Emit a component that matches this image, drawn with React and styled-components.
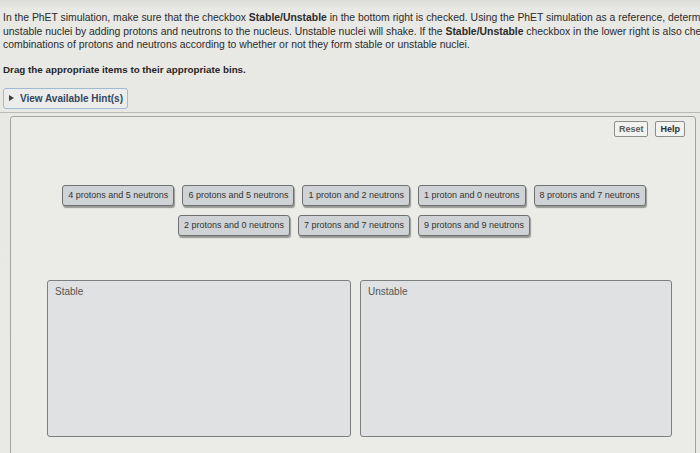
import React from 'react'
import styled, { createGlobalStyle } from 'styled-components'

const GlobalStyle = createGlobalStyle`
  html, body {
    margin: 0;
    padding: 0;
    background: #e7e7e3;
    overflow: hidden;
  }
  * { box-sizing: border-box; }
`

const Page = styled.div`
  width: 700px;
  height: 453px;
  overflow: hidden;
  font-family: "Liberation Sans", Arial, sans-serif;
  color: #2b2b2b;
  background: linear-gradient(180deg, #dcdcd8 0px, #e8e8e4 9px, #e9e9e5 100%);
  padding-top: 11px;
`

const Prompt = styled.div`
  padding: 0 0 0 3px;
  font-size: 10.4px;
  line-height: 13.5px;
  white-space: nowrap;
`

const Line = styled.div``

const Instruction = styled.div`
  margin-top: 12px;
  padding-left: 3px;
  font-size: 9.8px;
  font-weight: bold;
  color: #262626;
`

const HintButton = styled.button`
  display: flex;
  align-items: center;
  gap: 6px;
  margin: 13px 0 0 3px;
  width: 125px;
  height: 21px;
  padding: 0 0 0 5px;
  border: 1.5px solid #9fbad2;
  border-radius: 3px;
  background: #ecedeb;
  font-family: inherit;
  font-size: 10px;
  font-weight: bold;
  color: #33465e;
  cursor: pointer;
`

const Arrow = styled.span`
  width: 0;
  height: 0;
  border-top: 3.5px solid transparent;
  border-bottom: 3.5px solid transparent;
  border-left: 5px solid #3a3d42;
`

const Divider = styled.div`
  margin-top: 3px;
  height: 1px;
  background: #b9b9b6;
`

const Panel = styled.div`
  margin: 3px 4px 0 10px;
  height: 360px;
  border: 1px solid #a3a3a0;
  border-radius: 3px;
  background: #ebebe7;
  padding: 4px 10px 0 0;
`

const Toolbar = styled.div`
  display: flex;
  justify-content: flex-end;
  gap: 7px;
`

const ToolButton = styled.button`
  height: 16px;
  padding: 0 4px;
  border: 1px solid #8d8d8a;
  border-radius: 2px;
  background: #f2f2f0;
  font-family: inherit;
  font-size: 9px;
  font-weight: bold;
  color: ${p => (p.$muted ? '#5a5a5a' : '#2e2e2e')};
`

const ItemsArea = styled.div`
  display: flex;
  flex-wrap: wrap;
  justify-content: center;
  row-gap: 9px;
  column-gap: 8px;
  width: 610px;
  margin: 48px 0 0 38px;
`

const Chip = styled.div`
  height: 21px;
  display: flex;
  align-items: center;
  padding: 0 5px;
  border: 1px solid #6e7072;
  border-radius: 3px;
  background: #d0d3d5;
  box-shadow: 1px 2px 1px rgba(0, 0, 0, 0.35);
  font-size: 9px;
  color: #333;
  white-space: nowrap;
`

const Bins = styled.div`
  display: flex;
  gap: 9px;
  margin: 44px 0 0 36px;
`

const Bin = styled.div`
  width: ${p => p.$w}px;
  height: 157px;
  border: 1px solid #7c7e80;
  border-radius: 3px;
  background: #dfe1e2;
  padding: 5px 7px;
  font-size: 10px;
  color: #555;
`

const items = [
  '4 protons and 5 neutrons',
  '6 protons and 5 neutrons',
  '1 proton and 2 neutrons',
  '1 proton and 0 neutrons',
  '8 protons and 7 neutrons',
  '2 protons and 0 neutrons',
  '7 protons and 7 neutrons',
  '9 protons and 9 neutrons',
]

export default function App() {
  return (
    <Page>
      <GlobalStyle />
      <Prompt>
        <Line>
          In the PhET simulation, make sure that the checkbox <b>Stable/Unstable</b> in the bottom right is checked. Using the PhET simulation as a reference, determine how to make stable and
        </Line>
        <Line>
          unstable nuclei by adding protons and neutrons to the nucleus. Unstable nuclei will shake. If the <b>Stable/Unstable</b> checkbox in the lower right is also checked, sort the following
        </Line>
        <Line>
          combinations of protons and neutrons according to whether or not they form stable or unstable nuclei.
        </Line>
      </Prompt>
      <Instruction>Drag the appropriate items to their appropriate bins.</Instruction>
      <HintButton>
        <Arrow />
        View Available Hint(s)
      </HintButton>
      <Divider />
      <Panel>
        <Toolbar>
          <ToolButton $muted>Reset</ToolButton>
          <ToolButton>Help</ToolButton>
        </Toolbar>
        <ItemsArea>
          {items.map(t => (
            <Chip key={t}>{t}</Chip>
          ))}
        </ItemsArea>
        <Bins>
          <Bin $w={304}>Stable</Bin>
          <Bin $w={312}>Unstable</Bin>
        </Bins>
      </Panel>
    </Page>
  )
}
